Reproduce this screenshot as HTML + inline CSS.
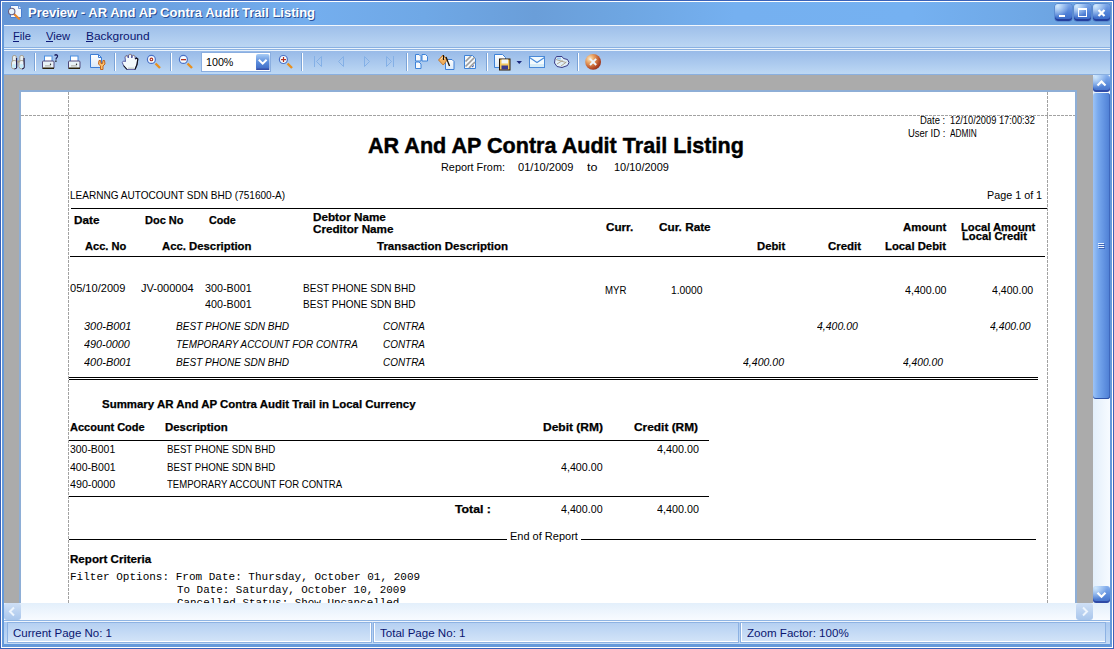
<!DOCTYPE html>
<html><head><meta charset="utf-8">
<style>
html,body{margin:0;padding:0;}
body{width:1114px;height:649px;overflow:hidden;position:relative;background:#6396d8;font-family:"Liberation Sans",sans-serif;}
.a{position:absolute;}
.t{position:absolute;white-space:pre;transform-origin:0 0;}
.hl{position:absolute;height:1px;background:#000;}
svg{position:absolute;overflow:visible;}
</style></head><body>
<!-- window frame -->
<div class="a" style="left:0;top:0;width:1114px;height:649px;background:#3a62b8;"></div>
<div class="a" style="left:1px;top:1px;width:1112px;height:647px;background:#fff;"></div>
<div class="a" style="left:2px;top:2px;width:1110px;height:645px;background:#6499da;"></div>
<!-- title bar gradient -->
<div class="a" style="left:2px;top:2px;width:1110px;height:23px;background:linear-gradient(90deg,#6596d6 0%,#6ea6e6 20%,#74aeee 28%,#6fa8e6 38%,#6a9ed9 48%,#6ea6e2 56%,#75b0f0 66%,#75b1f1 82%,#6fa8e6 92%,#6a9fdc 100%);"></div>
<!-- menu bar -->
<div class="a" style="left:4px;top:25px;width:1106px;height:1px;background:#f2f7fd;"></div>
<div class="a" style="left:4px;top:26px;width:1106px;height:21px;background:linear-gradient(#9ebfea,#bbd6f3);"></div>
<div class="a" style="left:4px;top:47px;width:1106px;height:1px;background:#8ab1e1;"></div>
<div class="a" style="left:4px;top:48px;width:1106px;height:1px;background:#eaf3fc;"></div>
<div class="a" style="left:4px;top:49px;width:1106px;height:1px;background:#8ab1e1;"></div>
<div class="a" style="left:4px;top:50px;width:1106px;height:1px;background:#eaf3fc;"></div>
<!-- toolbar -->
<div class="a" style="left:4px;top:51px;width:1106px;height:23px;background:linear-gradient(#98bae8,#bdd8f4);"></div>
<div class="a" style="left:4px;top:74px;width:1106px;height:1px;background:#8ab0e0;"></div>
<!-- gray workspace -->
<div class="a" style="left:4px;top:75px;width:1089px;height:528px;background:#ababab;"></div>
<!-- page -->
<div class="a" style="left:19px;top:90px;width:1058px;height:513px;background:#8eaed6;"></div>
<div class="a" style="left:21px;top:92px;width:1054px;height:511px;background:#fff;"></div>
<!-- dashed margin lines -->
<div class="a" style="left:21px;top:115px;width:1054px;height:1px;background:repeating-linear-gradient(90deg,#a2a2a2 0 3px,transparent 3px 4px);"></div>
<div class="a" style="left:68px;top:92px;width:1px;height:511px;background:repeating-linear-gradient(180deg,#a2a2a2 0 3px,transparent 3px 4px);"></div>
<div class="a" style="left:1047px;top:92px;width:1px;height:511px;background:repeating-linear-gradient(180deg,#a2a2a2 0 3px,transparent 3px 4px);"></div>
<!-- report rules -->
<div class="hl" style="left:71px;top:208px;width:976px;"></div>
<div class="hl" style="left:70px;top:256px;width:975px;"></div>
<div class="hl" style="left:69px;top:377px;width:969px;"></div>
<div class="hl" style="left:69px;top:379px;width:969px;"></div>
<div class="hl" style="left:69px;top:440px;width:640px;"></div>
<div class="hl" style="left:69px;top:496px;width:640px;"></div>
<div class="hl" style="left:69px;top:539px;width:438px;"></div>
<div class="hl" style="left:581px;top:539px;width:455px;"></div>
<div class="a" style="left:0;top:0;width:1114px;height:603px;overflow:hidden;">
<div class="t" style='left:920.20px;top:116px;font:400 10px/10px "Liberation Sans", sans-serif;color:#000;transform:scaleX(0.9420);'>Date :</div>
<div class="t" style='left:950.30px;top:116px;font:400 10px/10px "Liberation Sans", sans-serif;color:#000;transform:scaleX(0.9252);'>12/10/2009 17:00:32</div>
<div class="t" style='left:908.00px;top:129px;font:400 10px/10px "Liberation Sans", sans-serif;color:#000;transform:scaleX(0.9465);'>User ID :</div>
<div class="t" style='left:950.30px;top:129px;font:400 10px/10px "Liberation Sans", sans-serif;color:#000;transform:scaleX(0.8313);'>ADMIN</div>
<div class="t" style='-webkit-text-stroke:0.45px #000;left:367.70px;top:135px;font:700 22.5px/22.5px "Liberation Sans", sans-serif;color:#000;transform:scaleX(0.9585);'>AR And AP Contra Audit Trail Listing</div>
<div class="t" style='left:441.20px;top:162px;font:400 11px/11px "Liberation Sans", sans-serif;color:#000;transform:scaleX(0.9871);'>Report From:</div>
<div class="t" style='left:518.20px;top:162px;font:400 11px/11px "Liberation Sans", sans-serif;color:#000;transform:scaleX(1.0066);'>01/10/2009</div>
<div class="t" style='left:586.80px;top:162px;font:400 11px/11px "Liberation Sans", sans-serif;color:#000;transform:scaleX(1.1373);'>to</div>
<div class="t" style='left:614.40px;top:162px;font:400 11px/11px "Liberation Sans", sans-serif;color:#000;transform:scaleX(0.9975);'>10/10/2009</div>
<div class="t" style='left:70.20px;top:190px;font:400 11px/11px "Liberation Sans", sans-serif;color:#000;transform:scaleX(0.9131);'>LEARNNG AUTOCOUNT SDN BHD (751600-A)</div>
<div class="t" style='left:987.20px;top:190px;font:400 11px/11px "Liberation Sans", sans-serif;color:#000;transform:scaleX(0.9795);'>Page 1 of 1</div>
<div class="t" style='-webkit-text-stroke:0.25px #000;left:73.50px;top:215px;font:700 11px/11px "Liberation Sans", sans-serif;color:#000;transform:scaleX(1.0664);'>Date</div>
<div class="t" style='-webkit-text-stroke:0.25px #000;left:145.30px;top:215px;font:700 11px/11px "Liberation Sans", sans-serif;color:#000;transform:scaleX(1.0005);'>Doc No</div>
<div class="t" style='-webkit-text-stroke:0.25px #000;left:209.00px;top:215px;font:700 11px/11px "Liberation Sans", sans-serif;color:#000;transform:scaleX(0.9751);'>Code</div>
<div class="t" style='-webkit-text-stroke:0.25px #000;left:313.30px;top:212px;font:700 11px/11px "Liberation Sans", sans-serif;color:#000;transform:scaleX(1.0638);'>Debtor Name</div>
<div class="t" style='-webkit-text-stroke:0.25px #000;left:313.00px;top:224px;font:700 11px/11px "Liberation Sans", sans-serif;color:#000;transform:scaleX(1.0611);'>Creditor Name</div>
<div class="t" style='-webkit-text-stroke:0.25px #000;left:605.80px;top:222px;font:700 11px/11px "Liberation Sans", sans-serif;color:#000;transform:scaleX(1.0618);'>Curr.</div>
<div class="t" style='-webkit-text-stroke:0.25px #000;left:659.00px;top:222px;font:700 11px/11px "Liberation Sans", sans-serif;color:#000;transform:scaleX(1.0690);'>Cur. Rate</div>
<div class="t" style='-webkit-text-stroke:0.25px #000;left:903.00px;top:222px;font:700 11px/11px "Liberation Sans", sans-serif;color:#000;transform:scaleX(1.0410);'>Amount</div>
<div class="t" style='-webkit-text-stroke:0.25px #000;left:961.20px;top:222px;font:700 11px/11px "Liberation Sans", sans-serif;color:#000;transform:scaleX(1.0194);'>Local Amount</div>
<div class="t" style='-webkit-text-stroke:0.25px #000;left:962.00px;top:231px;font:700 11px/11px "Liberation Sans", sans-serif;color:#000;transform:scaleX(1.0218);'>Local Credit</div>
<div class="t" style='-webkit-text-stroke:0.25px #000;left:85.00px;top:241px;font:700 11px/11px "Liberation Sans", sans-serif;color:#000;transform:scaleX(1.0088);'>Acc. No</div>
<div class="t" style='-webkit-text-stroke:0.25px #000;left:161.80px;top:241px;font:700 11px/11px "Liberation Sans", sans-serif;color:#000;transform:scaleX(1.0301);'>Acc. Description</div>
<div class="t" style='-webkit-text-stroke:0.25px #000;left:377.00px;top:241px;font:700 11px/11px "Liberation Sans", sans-serif;color:#000;transform:scaleX(1.0463);'>Transaction Description</div>
<div class="t" style='-webkit-text-stroke:0.25px #000;left:756.50px;top:241px;font:700 11px/11px "Liberation Sans", sans-serif;color:#000;transform:scaleX(1.0238);'>Debit</div>
<div class="t" style='-webkit-text-stroke:0.25px #000;left:827.90px;top:241px;font:700 11px/11px "Liberation Sans", sans-serif;color:#000;transform:scaleX(1.0399);'>Credit</div>
<div class="t" style='-webkit-text-stroke:0.25px #000;left:885.30px;top:241px;font:700 11px/11px "Liberation Sans", sans-serif;color:#000;transform:scaleX(1.0281);'>Local Debit</div>
<div class="t" style='left:70.20px;top:283px;font:400 11px/11px "Liberation Sans", sans-serif;color:#000;transform:scaleX(1.0048);'>05/10/2009</div>
<div class="t" style='left:141.20px;top:283px;font:400 11px/11px "Liberation Sans", sans-serif;color:#000;transform:scaleX(1.0023);'>JV-000004</div>
<div class="t" style='left:205.00px;top:283px;font:400 11px/11px "Liberation Sans", sans-serif;color:#000;transform:scaleX(0.9771);'>300-B001</div>
<div class="t" style='left:303.30px;top:283px;font:400 11px/11px "Liberation Sans", sans-serif;color:#000;transform:scaleX(0.9124);'>BEST PHONE SDN BHD</div>
<div class="t" style='left:605.30px;top:285px;font:400 11px/11px "Liberation Sans", sans-serif;color:#000;transform:scaleX(0.8776);'>MYR</div>
<div class="t" style='left:670.70px;top:285px;font:400 11px/11px "Liberation Sans", sans-serif;color:#000;transform:scaleX(0.9395);'>1.0000</div>
<div class="t" style='left:905.20px;top:285px;font:400 11px/11px "Liberation Sans", sans-serif;color:#000;transform:scaleX(0.9695);'>4,400.00</div>
<div class="t" style='left:992.40px;top:285px;font:400 11px/11px "Liberation Sans", sans-serif;color:#000;transform:scaleX(0.9625);'>4,400.00</div>
<div class="t" style='left:205.40px;top:299px;font:400 11px/11px "Liberation Sans", sans-serif;color:#000;transform:scaleX(0.9771);'>400-B001</div>
<div class="t" style='left:303.30px;top:299px;font:400 11px/11px "Liberation Sans", sans-serif;color:#000;transform:scaleX(0.9124);'>BEST PHONE SDN BHD</div>
<div class="t" style='left:84.20px;top:321px;font:italic 400 11px/11px "Liberation Sans", sans-serif;color:#000;transform:scaleX(0.9939);'>300-B001</div>
<div class="t" style='left:175.90px;top:321px;font:italic 400 11px/11px "Liberation Sans", sans-serif;color:#000;transform:scaleX(0.9156);'>BEST PHONE SDN BHD</div>
<div class="t" style='left:383.30px;top:321px;font:italic 400 11px/11px "Liberation Sans", sans-serif;color:#000;transform:scaleX(0.9044);'>CONTRA</div>
<div class="t" style='left:84.20px;top:339px;font:italic 400 11px/11px "Liberation Sans", sans-serif;color:#000;transform:scaleX(0.9838);'>490-0000</div>
<div class="t" style='left:175.90px;top:339px;font:italic 400 11px/11px "Liberation Sans", sans-serif;color:#000;transform:scaleX(0.9003);'>TEMPORARY ACCOUNT FOR CONTRA</div>
<div class="t" style='left:383.30px;top:339px;font:italic 400 11px/11px "Liberation Sans", sans-serif;color:#000;transform:scaleX(0.9044);'>CONTRA</div>
<div class="t" style='left:84.20px;top:357px;font:italic 400 11px/11px "Liberation Sans", sans-serif;color:#000;transform:scaleX(0.9939);'>400-B001</div>
<div class="t" style='left:175.90px;top:357px;font:italic 400 11px/11px "Liberation Sans", sans-serif;color:#000;transform:scaleX(0.9156);'>BEST PHONE SDN BHD</div>
<div class="t" style='left:383.30px;top:357px;font:italic 400 11px/11px "Liberation Sans", sans-serif;color:#000;transform:scaleX(0.9044);'>CONTRA</div>
<div class="t" style='left:817.10px;top:321px;font:italic 400 11px/11px "Liberation Sans", sans-serif;color:#000;transform:scaleX(0.9542);'>4,400.00</div>
<div class="t" style='left:989.50px;top:321px;font:italic 400 11px/11px "Liberation Sans", sans-serif;color:#000;transform:scaleX(0.9496);'>4,400.00</div>
<div class="t" style='left:743.20px;top:357px;font:italic 400 11px/11px "Liberation Sans", sans-serif;color:#000;transform:scaleX(0.9588);'>4,400.00</div>
<div class="t" style='left:902.80px;top:357px;font:italic 400 11px/11px "Liberation Sans", sans-serif;color:#000;transform:scaleX(0.9359);'>4,400.00</div>
<div class="t" style='-webkit-text-stroke:0.25px #000;left:102.40px;top:399px;font:700 11px/11px "Liberation Sans", sans-serif;color:#000;transform:scaleX(1.0406);'>Summary AR And AP Contra Audit Trail in Local Currency</div>
<div class="t" style='-webkit-text-stroke:0.25px #000;left:70.20px;top:422px;font:700 11px/11px "Liberation Sans", sans-serif;color:#000;transform:scaleX(1.0022);'>Account Code</div>
<div class="t" style='-webkit-text-stroke:0.25px #000;left:165.40px;top:422px;font:700 11px/11px "Liberation Sans", sans-serif;color:#000;transform:scaleX(1.0363);'>Description</div>
<div class="t" style='-webkit-text-stroke:0.25px #000;left:542.50px;top:422px;font:700 11px/11px "Liberation Sans", sans-serif;color:#000;transform:scaleX(1.0917);'>Debit (RM)</div>
<div class="t" style='-webkit-text-stroke:0.25px #000;left:634.00px;top:422px;font:700 11px/11px "Liberation Sans", sans-serif;color:#000;transform:scaleX(1.0804);'>Credit (RM)</div>
<div class="t" style='left:70.20px;top:444px;font:400 11px/11px "Liberation Sans", sans-serif;color:#000;transform:scaleX(0.9477);'>300-B001</div>
<div class="t" style='left:166.60px;top:444px;font:400 11px/11px "Liberation Sans", sans-serif;color:#000;transform:scaleX(0.8776);'>BEST PHONE SDN BHD</div>
<div class="t" style='left:656.60px;top:444px;font:400 11px/11px "Liberation Sans", sans-serif;color:#000;transform:scaleX(0.9789);'>4,400.00</div>
<div class="t" style='left:70.20px;top:462px;font:400 11px/11px "Liberation Sans", sans-serif;color:#000;transform:scaleX(0.9561);'>400-B001</div>
<div class="t" style='left:166.60px;top:462px;font:400 11px/11px "Liberation Sans", sans-serif;color:#000;transform:scaleX(0.8776);'>BEST PHONE SDN BHD</div>
<div class="t" style='left:561.40px;top:462px;font:400 11px/11px "Liberation Sans", sans-serif;color:#000;transform:scaleX(0.9719);'>4,400.00</div>
<div class="t" style='left:70.20px;top:479px;font:400 11px/11px "Liberation Sans", sans-serif;color:#000;transform:scaleX(0.9726);'>490-0000</div>
<div class="t" style='left:166.60px;top:479px;font:400 11px/11px "Liberation Sans", sans-serif;color:#000;transform:scaleX(0.8679);'>TEMPORARY ACCOUNT FOR CONTRA</div>
<div class="t" style='-webkit-text-stroke:0.25px #000;left:454.60px;top:504px;font:700 11px/11px "Liberation Sans", sans-serif;color:#000;transform:scaleX(1.1169);'>Total :</div>
<div class="t" style='left:561.40px;top:504px;font:400 11px/11px "Liberation Sans", sans-serif;color:#000;transform:scaleX(0.9719);'>4,400.00</div>
<div class="t" style='left:656.60px;top:504px;font:400 11px/11px "Liberation Sans", sans-serif;color:#000;transform:scaleX(0.9789);'>4,400.00</div>
<div class="t" style='left:510.30px;top:531px;font:400 11px/11px "Liberation Sans", sans-serif;color:#000;transform:scaleX(0.9997);'>End of Report</div>
<div class="t" style='-webkit-text-stroke:0.25px #000;left:70.00px;top:554px;font:700 11px/11px "Liberation Sans", sans-serif;color:#000;transform:scaleX(1.0539);'>Report Criteria</div>
<div class="t" style='left:70.00px;top:572px;font:400 11px/11px "Liberation Mono", monospace;color:#000;transform:scaleX(1.0007);'>Filter Options: From Date: Thursday, October 01, 2009</div>
<div class="t" style='left:177.20px;top:585px;font:400 11px/11px "Liberation Mono", monospace;color:#000;transform:scaleX(0.9910);'>To Date: Saturday, October 10, 2009</div>
<div class="t" style='left:177.20px;top:598px;font:400 11px/11px "Liberation Mono", monospace;color:#000;transform:scaleX(0.9907);'>Cancelled Status: Show Uncancelled</div>
</div>
<!-- vertical scrollbar -->
<div class="a" style="left:1093px;top:75px;width:17px;height:528px;background:linear-gradient(90deg,#e3effb,#f7fbff);"></div>
<div class="a" style="left:1093px;top:75px;width:17px;height:17px;border-radius:3px;background:radial-gradient(circle at 15% 12%,rgba(215,238,255,0.9) 0,rgba(215,238,255,0) 55%),linear-gradient(#86b0ee,#5b8bdb 55%,#4470c8);box-shadow:inset 0 -2px 0 #2f4aa6;"></div>
<svg style="left:1093px;top:75px" width="17" height="16"><path d="M4.5 10.5 L8.5 6.5 L12.5 10.5" fill="none" stroke="#fff" stroke-width="2.2"/></svg>
<div class="a" style="left:1093px;top:93px;width:17px;height:306px;border-radius:3px;background:linear-gradient(90deg,#9cc3f6 0%,#78a9ee 30%,#5f90e0 70%,#4d7ed3 100%);box-shadow:inset 0 -1px 0 #2f52a6, inset -1px 0 0 #3f68bd;"></div>
<div class="a" style="left:1098px;top:243px;width:6px;height:1px;background:#e8f2fd;box-shadow:0 2px 0 #e8f2fd,0 4px 0 #e8f2fd;"></div>
<div class="a" style="left:1099px;top:244px;width:6px;height:1px;background:#3c64b8;box-shadow:0 2px 0 #3c64b8,0 4px 0 #3c64b8;"></div>
<div class="a" style="left:1093px;top:586px;width:17px;height:17px;border-radius:3px;background:radial-gradient(circle at 15% 12%,rgba(215,238,255,0.9) 0,rgba(215,238,255,0) 55%),linear-gradient(#86b0ee,#5b8bdb 55%,#4470c8);box-shadow:inset 0 -2px 0 #2f4aa6;"></div>
<svg style="left:1093px;top:586px" width="17" height="16"><path d="M4.5 6.8 L8.5 10.8 L12.5 6.8" fill="none" stroke="#fff" stroke-width="2.2"/></svg>
<!-- horizontal scrollbar -->
<div class="a" style="left:4px;top:603px;width:1106px;height:17px;background:linear-gradient(#e3effb,#f8fbff);"></div>
<div class="a" style="left:4px;top:603px;width:17px;height:17px;border-radius:3px;background:linear-gradient(#cfe0f6,#a9c6ec);"></div>
<svg style="left:4px;top:603px" width="17" height="17"><path d="M10 4.5 L6 8.5 L10 12.5" fill="none" stroke="#eef5fd" stroke-width="2"/></svg>
<div class="a" style="left:1076px;top:603px;width:17px;height:17px;border-radius:3px;background:linear-gradient(#cfe0f6,#a9c6ec);"></div>
<svg style="left:1076px;top:603px" width="17" height="17"><path d="M7 4.5 L11 8.5 L7 12.5" fill="none" stroke="#eef5fd" stroke-width="2"/></svg>
<!-- status bar -->
<div class="a" style="left:4px;top:620px;width:1106px;height:1px;background:#8fb4e3;"></div>
<div class="a" style="left:4px;top:621px;width:1106px;height:1px;background:#eef5fd;"></div>
<div class="a" style="left:4px;top:622px;width:1106px;height:22px;background:linear-gradient(#a9c8f0,#c4dbf5);"></div>
<div class="a" style="left:7px;top:622px;width:363px;height:19px;border:1px solid #8db2e3;border-top-color:#8db2e3;background:linear-gradient(#b5d0f2,#d3e4f8);box-shadow:inset -1px -1px 0 #fff;"></div>
<div class="a" style="left:373px;top:622px;width:364px;height:19px;border:1px solid #8db2e3;background:linear-gradient(#b5d0f2,#d3e4f8);box-shadow:inset 1px -1px 0 #fff;"></div>
<div class="a" style="left:740px;top:622px;width:364px;height:19px;border:1px solid #8db2e3;background:linear-gradient(#b5d0f2,#d3e4f8);box-shadow:inset 1px -1px 0 #fff;"></div>
<!-- title bar buttons -->
<div class="a" style="left:1055px;top:4px;width:17px;height:17px;border-radius:3px;background:radial-gradient(circle at 15% 12%,rgba(215,238,255,0.95) 0,rgba(215,238,255,0) 55%),linear-gradient(#79a5e8,#4f80d6 55%,#3866c4);box-shadow:inset 0 -2px 0 #24409e, 0 0 0 0.5px rgba(40,70,160,0.5);"></div>
<div class="a" style="left:1059px;top:15px;width:6px;height:2px;background:#fff;"></div>
<div class="a" style="left:1074px;top:4px;width:17px;height:17px;border-radius:3px;background:radial-gradient(circle at 15% 12%,rgba(215,238,255,0.95) 0,rgba(215,238,255,0) 55%),linear-gradient(#79a5e8,#4f80d6 55%,#3866c4);box-shadow:inset 0 -2px 0 #24409e, 0 0 0 0.5px rgba(40,70,160,0.5);"></div>
<div class="a" style="left:1078px;top:8px;width:7px;height:6px;border:1px solid #fff;border-top-width:2px;"></div>
<div class="a" style="left:1093px;top:4px;width:17px;height:17px;border-radius:3px;background:radial-gradient(circle at 15% 12%,rgba(215,238,255,0.95) 0,rgba(215,238,255,0) 55%),linear-gradient(#79a5e8,#4f80d6 55%,#3866c4);box-shadow:inset 0 -2px 0 #24409e, 0 0 0 0.5px rgba(40,70,160,0.5);"></div>
<svg style="left:1093px;top:4px" width="17" height="17"><path d="M5.5 6 L11.5 12 M11.5 6 L5.5 12" stroke="#fff" stroke-width="2.2"/></svg>
<!-- title icon -->
<svg style="left:3px;top:3px" width="20" height="20">
 <path d="M7.5 2.5 H15.5 L18.5 5.5 V14.5 H7.5 Z" fill="#f4f8fe" stroke="#4a7fd0" stroke-width="1"/>
 <path d="M15.5 2.5 V5.5 H18.5" fill="#dce8f8" stroke="#4a7fd0" stroke-width="0.8"/>
 <line x1="11.5" y1="11.5" x2="16" y2="15.8" stroke="#e8862a" stroke-width="2.2" stroke-linecap="round"/>
 <circle cx="8.7" cy="8.5" r="3.2" fill="#e4f2fc" stroke="#6a5f80" stroke-width="1.1"/>
</svg>
<div class="a" style="left:13px;top:41px;width:6px;height:1px;background:#0c1a7a;"></div>
<div class="a" style="left:46px;top:41px;width:7px;height:1px;background:#0c1a7a;"></div>
<div class="a" style="left:86px;top:41px;width:7px;height:1px;background:#0c1a7a;"></div>
<!-- TOOLBAR ICONS -->
<svg style="left:0;top:0" width="1114" height="80">
 <defs>
  <linearGradient id="gbtn" x1="0" y1="0" x2="0" y2="1"><stop offset="0" stop-color="#a9cdf6"/><stop offset="0.5" stop-color="#5b8ddc"/><stop offset="1" stop-color="#3d68c4"/></linearGradient>
  <linearGradient id="gdoc" x1="0" y1="0" x2="0" y2="1"><stop offset="0" stop-color="#ffffff"/><stop offset="1" stop-color="#dbe9f8"/></linearGradient>
  <radialGradient id="gclose" cx="0.3" cy="0.3" r="0.8"><stop offset="0" stop-color="#fde8c0"/><stop offset="0.35" stop-color="#e8a060"/><stop offset="0.75" stop-color="#b8502a"/><stop offset="1" stop-color="#8e2a18"/></radialGradient>
 </defs>
 <!-- separators -->
 <g>
  <rect x="34" y="53" width="1" height="18" fill="#7ba4d8"/><rect x="35" y="53" width="1" height="18" fill="#fff"/>
  <rect x="114" y="53" width="1" height="18" fill="#7ba4d8"/><rect x="115" y="53" width="1" height="18" fill="#fff"/>
  <rect x="170" y="53" width="1" height="18" fill="#7ba4d8"/><rect x="171" y="53" width="1" height="18" fill="#fff"/>
  <rect x="301" y="53" width="1" height="18" fill="#7ba4d8"/><rect x="302" y="53" width="1" height="18" fill="#fff"/>
  <rect x="406" y="53" width="1" height="18" fill="#7ba4d8"/><rect x="407" y="53" width="1" height="18" fill="#fff"/>
  <rect x="486" y="53" width="1" height="18" fill="#7ba4d8"/><rect x="487" y="53" width="1" height="18" fill="#fff"/>
  <rect x="577" y="53" width="1" height="18" fill="#7ba4d8"/><rect x="578" y="53" width="1" height="18" fill="#fff"/>
 </g>
 <!-- binoculars -->
 <g>
  <rect x="12.5" y="55.5" width="3.8" height="7" rx="1.5" fill="#e6eef2" stroke="#a09684" stroke-width="0.9"/>
  <rect x="11.5" y="60.5" width="5.5" height="8.3" rx="2.4" fill="#e8f2f6" stroke="#a09684" stroke-width="0.9"/>
  <path d="M16.6 58 V67.5 Q16.5 68.8 14.5 68.9" fill="none" stroke="#1c1a50" stroke-width="1.1"/>
  <circle cx="14.1" cy="66" r="2.1" fill="#c6ecfb"/>
  <rect x="17" y="60.5" width="2.2" height="2.2" fill="#a8a08e"/>
  <rect x="19.8" y="55.5" width="3.8" height="7" rx="1.5" fill="#e6eef2" stroke="#a09684" stroke-width="0.9"/>
  <rect x="19" y="60.5" width="5.5" height="8.3" rx="2.4" fill="#e8f2f6" stroke="#a09684" stroke-width="0.9"/>
  <path d="M24.1 58 V67.5 Q24 68.8 22 68.9" fill="none" stroke="#1c1a50" stroke-width="1.1"/>
  <circle cx="21.6" cy="66" r="2.1" fill="#c6ecfb"/>
 </g>
 <!-- print with ? -->
 <g>
  <rect x="44.5" y="56" width="7.5" height="6" fill="#ffffff" stroke="#4a8ee0" stroke-width="1"/>
  <rect x="42.5" y="61" width="11.5" height="7.5" rx="1" fill="#e8f2f6" stroke="#50487a" stroke-width="1"/>
  <rect x="42.5" y="67.5" width="11.5" height="1.5" fill="#2a2008"/>
  <rect x="45" y="65.5" width="6" height="0.8" fill="#9c9488"/>
  <circle cx="50.5" cy="64.3" r="0.7" fill="#222"/>
  <path d="M54.5 55.5 Q56 54 57.5 55.5 Q58 57 56.5 58 L55.8 59.5" fill="none" stroke="#1e2060" stroke-width="1.2"/>
  <rect x="55.2" y="60.5" width="1.4" height="1.3" fill="#111"/>
 </g>
 <!-- print -->
 <g>
  <rect x="70.5" y="56" width="7.5" height="6" fill="#ffffff" stroke="#4a8ee0" stroke-width="1"/>
  <rect x="68.5" y="61" width="11.5" height="7.5" rx="1" fill="#e8f2f6" stroke="#50487a" stroke-width="1"/>
  <rect x="68.5" y="67.5" width="11.5" height="1.5" fill="#2a2008"/>
  <rect x="71" y="65.5" width="6" height="0.8" fill="#9c9488"/>
  <circle cx="76.5" cy="64.3" r="0.7" fill="#222"/>
 </g>
 <!-- page setup -->
 <g>
  <path d="M90.5 54.5 H98.5 L101.5 57.5 V67.5 H90.5 Z" fill="url(#gdoc)" stroke="#3d7ed6" stroke-width="1"/>
  <path d="M98.5 54.5 V57.5 H101.5" fill="none" stroke="#3d7ed6" stroke-width="1"/>
  <path d="M99 60.5 L100.5 60.5 L101 63.5 L102.5 63.5 L103 60.5 L104.5 60.5 L105 64 L103 66 L103 69.5 L100.5 69.5 L100.5 66 L98.5 64 Z" fill="#f8c070" stroke="#c05a10" stroke-width="0.9"/>
 </g>
 <!-- hand -->
 <g>
  <path d="M127 69.5 L123.5 65.5 L122.3 62.5 L123.5 61 L125.5 61.5 L125 57 L126 55.5 L127.6 55.8 L128.3 58 L128.6 55 L130 54.2 L131.5 54.8 L131.8 58 L132.5 55.5 L134 55.3 L135 56.5 L135.3 59 L136.5 58 L137.8 59 L137 64.5 L135 69.5 Z" fill="#f2f8fb" stroke="#4a4c98" stroke-width="0.9"/>
  <path d="M125.4 57 Q126 55.6 127.6 55.8 M128.6 55 Q130 54 131.5 54.8 M132.5 55.5 Q134 55 135 56.5" fill="none" stroke="#a89c88" stroke-width="0.9"/>
  <path d="M135.3 59 L136.5 58 L137.8 59 L137 64.5 L135 69.5" fill="none" stroke="#101018" stroke-width="1.2"/>
  <path d="M127 69.5 L123.5 65.5" fill="none" stroke="#101018" stroke-width="1.1"/>
  <rect x="128" y="67.5" width="6" height="1.6" fill="#c8d0d0"/>
 </g>
 <!-- zoom tool -->
 <g>
  <line x1="155.5" y1="63.5" x2="160" y2="68" stroke="#e8901e" stroke-width="2.4"/>
  <circle cx="151.4" cy="59.4" r="4" fill="#f4fbff" stroke="#4a72c8" stroke-width="1.2"/>
  <circle cx="151.4" cy="59.4" r="1.3" fill="none" stroke="#b03020" stroke-width="1.1"/>
 </g>
 <!-- zoom out -->
 <g>
  <line x1="187.5" y1="63.5" x2="192" y2="68" stroke="#e8901e" stroke-width="2.4"/>
  <circle cx="183.4" cy="59.4" r="4" fill="#f4fbff" stroke="#4a72c8" stroke-width="1.2"/>
  <rect x="181" y="59" width="5" height="1.3" fill="#b03020"/>
 </g>
 <!-- combo -->
 <rect x="201.5" y="52.5" width="69" height="19" fill="#fff" stroke="#8aaee0" stroke-width="1"/>
 <rect x="256" y="54" width="13.5" height="16" rx="2" fill="url(#gbtn)"/>
 <rect x="256" y="68.5" width="13.5" height="1.5" rx="0.7" fill="#3650a8"/>
 <path d="M258.8 59.8 L262.7 63.7 L266.6 59.8" fill="none" stroke="#fff" stroke-width="2"/>
 <!-- zoom in -->
 <g>
  <line x1="287.5" y1="63.5" x2="292" y2="68" stroke="#e8901e" stroke-width="2.4"/>
  <circle cx="283.4" cy="59.5" r="4" fill="#f4fbff" stroke="#4a72c8" stroke-width="1.2"/>
  <rect x="281" y="59" width="5" height="1.2" fill="#b03020"/><rect x="282.9" y="57" width="1.2" height="5" fill="#b03020"/>
 </g>
 <!-- nav (disabled) -->
 <g fill="none" stroke="#84b0e6" stroke-width="1">
  <path d="M314.5 56 V67"/><path d="M321.5 56.5 L316.5 61.5 L321.5 66.5 Z"/>
  <path d="M343.5 56.5 L338.5 61.5 L343.5 66.5 Z"/>
  <path d="M364.5 56.5 L369.5 61.5 L364.5 66.5 Z"/>
  <path d="M386.5 56.5 L391.5 61.5 L386.5 66.5 Z"/><path d="M393.5 56 V67"/>
 </g>
 <!-- multipage -->
 <g fill="#f6f9fd" stroke="#3d82d8" stroke-width="1">
  <path d="M415.5 54.5 H419 L421 56.5 V61 H415.5 Z"/>
  <path d="M422 54.5 H425.5 L427.5 56.5 V61 H422 Z"/>
  <path d="M415.5 62 H419 L421 64 V68.5 H415.5 Z"/>
 </g>
 <!-- paint bucket -->
 <g>
  <path d="M445.5 59.5 H452 L454 61.5 V69.5 H445.5 Z" fill="url(#gdoc)" stroke="#3d7ed6" stroke-width="1"/>
  <path d="M443 55 L447.5 59.8 L443.2 65 L438.5 60 Z" fill="#f0b060" stroke="#c07020" stroke-width="0.9"/><path d="M440.5 59.5 L443 57 L445 59" fill="none" stroke="#fde0b0" stroke-width="1"/>
  <path d="M443.5 55 V60" stroke="#111" stroke-width="1.1"/>
  <path d="M446 57 L449.5 66" stroke="#1a1208" stroke-width="1.3"/>
 </g>
 <!-- watermark doc -->
 <g>
  <path d="M464.5 55.5 H472.5 L475.5 58.5 V68.5 H464.5 Z" fill="#f4f8fb" stroke="#3d82d8" stroke-width="1"/>
  <path d="M465.5 61.5 L471 56 M465.5 66.5 L474.5 57.5 M469 68 L475 62" stroke="#9c9c9c" stroke-width="1.7"/>
  <path d="M472 67 L474 65.5" stroke="#3050b0" stroke-width="1"/>
 </g>
 <!-- save -->
 <g>
  <path d="M494.5 54.5 H502.5 L505.5 57.5 V67.5 H494.5 Z" fill="url(#gdoc)" stroke="#3d82d8" stroke-width="1"/>
  <rect x="499.5" y="59" width="10.5" height="11" fill="#f3c860" stroke="#2a1a08" stroke-width="1"/>
  <rect x="501.5" y="59.5" width="6.5" height="4" fill="#f2f6fa"/>
  <rect x="501.5" y="65.5" width="6.5" height="4" fill="#3a3a90"/>
 </g>
 <path d="M516.5 61 H522 L519.25 64 Z" fill="#1a2a80"/>
 <!-- envelope -->
 <g>
  <rect x="529.5" y="56.5" width="15" height="11" fill="#f4fbfe" stroke="#4a8ad8" stroke-width="1"/>
  <path d="M529.5 57.5 L537 62.5 L544.5 57.5" fill="none" stroke="#4a8ad8" stroke-width="1.1"/><rect x="530" y="64" width="14" height="3" fill="#d6ecf8"/>
 </g>
 <!-- fax -->
 <g>
  <path d="M556.5 56.5 H562 L563.5 58.5 L567.5 59.5 L569 62.5 L567.5 65.5 L562 67.5 L557 66.5 L554.5 63 L555 59 Z" fill="#e2f0f8" stroke="#3a3c88" stroke-width="1"/>
  <path d="M556 59.5 L566 62.5 M557 64 L562.5 60.5 M561 66 L566.5 62" stroke="#a89c86" stroke-width="0.9"/>
  <rect x="557" y="57.5" width="4" height="2" fill="#9cc8ee"/>
 </g>
 <!-- close -->
 <g>
  <circle cx="593.1" cy="61.9" r="7.9" fill="url(#gclose)"/>
  <path d="M590 58.8 L596.2 65 M596.2 58.8 L590 65" stroke="#eef6ff" stroke-width="1.9"/>
 </g>
</svg>

<div class="t" style='left:28.30px;top:6px;font:700 13px/13px "Liberation Sans", sans-serif;color:#fff;transform:scaleX(1.0011);text-shadow:1px 1px 0 #2a4f95;'>Preview - AR And AP Contra Audit Trail Listing</div>
<div class="t" style='left:13.30px;top:31px;font:400 11.5px/11.5px "Liberation Sans", sans-serif;color:#0a1670;transform:scaleX(0.9705);'>File</div>
<div class="t" style='left:46.00px;top:31px;font:400 11.5px/11.5px "Liberation Sans", sans-serif;color:#0a1670;transform:scaleX(0.9759);'>View</div>
<div class="t" style='left:86.20px;top:31px;font:400 11.5px/11.5px "Liberation Sans", sans-serif;color:#0a1670;transform:scaleX(1.0364);'>Background</div>
<div class="t" style='left:205.90px;top:57px;font:400 11px/11px "Liberation Sans", sans-serif;color:#000;transform:scaleX(0.9734);'>100%</div>
<div class="t" style='left:12.50px;top:628px;font:400 11.5px/11.5px "Liberation Sans", sans-serif;color:#0a1670;transform:scaleX(0.9991);'>Current Page No: 1</div>
<div class="t" style='left:379.70px;top:628px;font:400 11.5px/11.5px "Liberation Sans", sans-serif;color:#0a1670;transform:scaleX(1.0056);'>Total Page No: 1</div>
<div class="t" style='left:746.50px;top:628px;font:400 11.5px/11.5px "Liberation Sans", sans-serif;color:#0a1670;transform:scaleX(1.0074);'>Zoom Factor: 100%</div>
</body></html>
